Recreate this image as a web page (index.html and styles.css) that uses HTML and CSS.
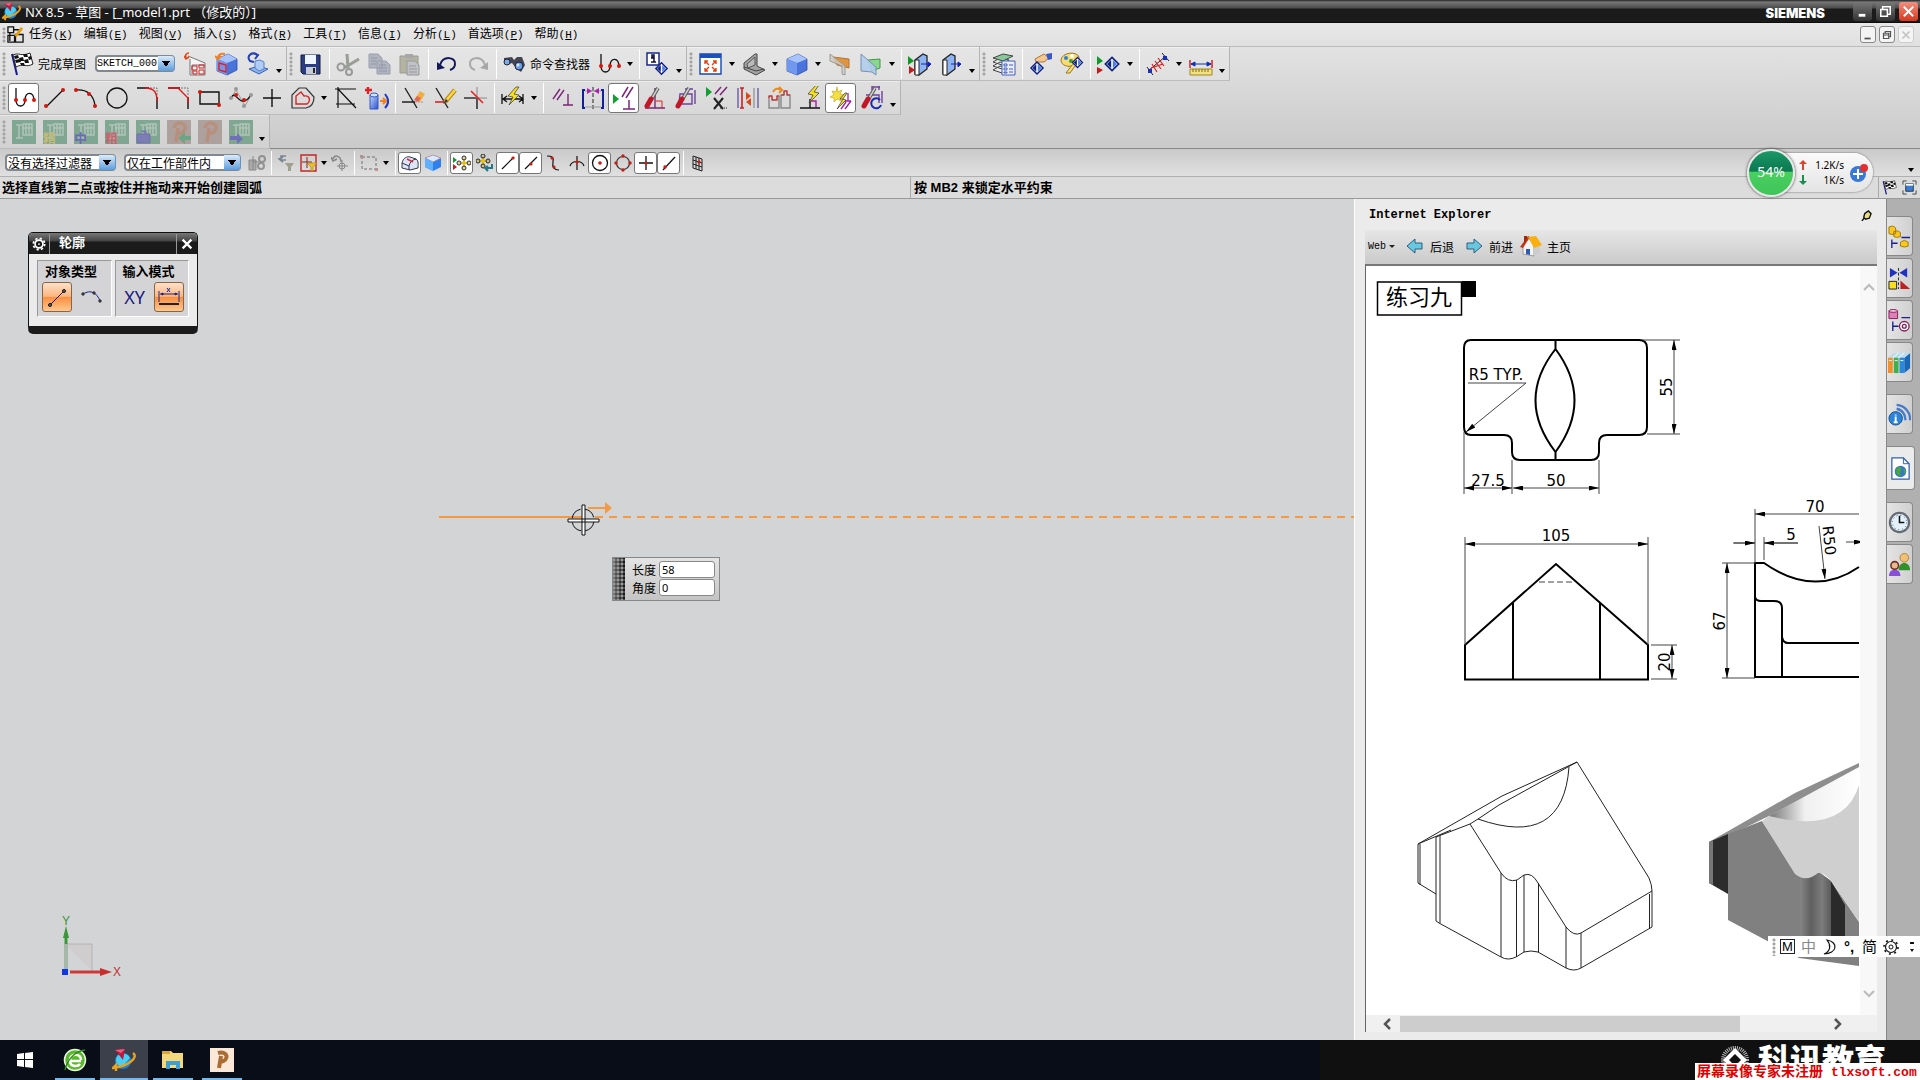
FILE: index.html
```html
<!DOCTYPE html>
<html lang="zh-CN">
<head>
    <meta charset="UTF-8">
    <title>NX 8.5 - 草图</title>
    <link rel="stylesheet" href="styles.css">
</head>
<body>
    <svg class="defs" width="0" height="0">
        <defs>
            <linearGradient id="blue" x1="0" y1="0" x2="1" y2="1"><stop offset="0" stop-color="#c4dcff"/><stop offset="1" stop-color="#2a50d0"/></linearGradient>
            <linearGradient id="bowl" x1="0" y1="0" x2="1" y2="0"><stop offset="0" stop-color="#777"/><stop offset=".4" stop-color="#f0f0f0"/><stop offset="1" stop-color="#fff"/></linearGradient>
            <linearGradient id="groove" x1="0" y1="0" x2="1" y2="0"><stop offset="0" stop-color="#858585"/><stop offset=".3" stop-color="#606060"/><stop offset=".6" stop-color="#7c7c7c"/><stop offset="1" stop-color="#444"/></linearGradient>
            <marker id="arr" viewBox="0 0 12 6" refX="12" refY="3" markerWidth="12" markerHeight="5" markerUnits="userSpaceOnUse" orient="auto-start-reverse"><path d="M0 0 12 3 0 6z"/></marker>
        </defs>
        <symbol id="i-profile" viewBox="0 0 24 24"><path d="M4 2v12c0 8 9 8 9 0 0-9 9-9 9 1" fill="none" stroke="#111" stroke-width="1.3"/><g fill="#d01810"><circle cx="4" cy="14" r="2"/><circle cx="13" cy="14" r="2"/><circle cx="22" cy="14" r="2"/></g></symbol>
        <symbol id="i-nx" viewBox="0 0 24 24"><circle cx="11" cy="13" r="8" fill="#1c80d8"/><path d="M4 12c0-8 12-8 14-2l-8 9c-4-1-6-4-6-7z" fill="#48d0f4"/><path d="M21 5c6 4-4 13-20 15l3-3 0 6" fill="none" stroke="#e8a420" stroke-width="2.4"/><path d="M3 2l10-1-2 11z" fill="#c01838"/><path d="M3 2l10-1-4 4z" fill="#e86080"/></symbol>
        <symbol id="i-flag" viewBox="0 0 24 24"><path d="M2 2l5 21" stroke="#1a1a90" stroke-width="2"/><path d="M3 3c6-3 8 2 17-2l3 11c-7 4-10-1-17 3z" fill="#fff" stroke="#222"/><path d="M4 4l4-1 1 3-4 1zM13 2l4 0 1 3-4 0zM9 6l4-1 1 4-4 0zM18 5l3-1 1 3-3 1zM5 8l5-1 1 3-5 1zM14 8l4-1 1 4-4 0zM10 11l4 0 1 3-4-1z" fill="#111"/></symbol>
        <symbol id="i-conflict" viewBox="0 0 24 24"><path d="M3 13L10 3M7 14L14 4M13 19h10M18 8v11" stroke="#7a2878" fill="none" stroke-width="1.4"/></symbol>
        <symbol id="i-cube" viewBox="0 0 24 24"><path d="M2 7L13 2l9 5v11l-10 5-10-4z" fill="#4a74dc" stroke="#2040a0" stroke-width=".7"/><path d="M2 7l11-5 9 5-10 4z" fill="#a8c4fa"/><path d="M2 7l10 4v12L2 19z" fill="#7098ee"/></symbol>
        <symbol id="i-diamond" viewBox="0 0 24 24"><path d="M12 4l8 8-8 8-8-8z" fill="#fff" stroke="#102080" stroke-width="2"/><path d="M11 7v10l-5-5z" fill="#102080"/><path d="M13 7v10l5-5z" fill="#4a80e0"/></symbol>
        <symbol id="i-bolt" viewBox="0 0 24 24"><path d="M15 1L7 10l5 1-4 8 10-10-5-1 5-7z" fill="#f4e020" stroke="#333" stroke-width=".7"/></symbol>
        <symbol id="i-driver" viewBox="0 0 24 24"><path d="M15 2l-7 12" stroke="#555" stroke-width="3.5"/><path d="M15 2l-7 12" stroke="#ccc" stroke-width="1.6"/><path d="M8 13l-4 7" stroke="#c01828" stroke-width="5" stroke-linecap="round"/></symbol>
        <symbol id="i-sheet" viewBox="0 0 24 24"><path d="M0 0h24v24H0z" fill="#6b9c80"/><path d="M4 5h6M7 5v13M4 18h7M10 8h10M11 4h9v11h-9zM14 4v11M17 4v11" fill="none" stroke="#a8c0b0" stroke-width="1.5"/></symbol>
        <symbol id="i-p" viewBox="0 0 24 24"><path d="M0 0h24v24H0z" fill="#a59490"/><path d="M9 22l2-14M7 8c1-7 12-6 11 0-1 5-5 6-8 5" fill="none" stroke="#b08068" stroke-width="3.5"/></symbol>
    </svg>

    <header class="titlebar">
        <svg class="app-icon" viewBox="0 0 24 24"><use href="#i-nx"/></svg>
        <h1>NX 8.5 - 草图 - [_model1.prt （修改的）]</h1>
        <strong class="brand">SIEMENS</strong>
        <div class="win-buttons">
            <button aria-label="最小化"><svg viewBox="0 0 18 18"><path d="M5 13h7" stroke="#fff" stroke-width="3"/></svg></button>
            <button aria-label="还原"><svg viewBox="0 0 18 18"><path d="M6 7V4h8v8h-3M4 7h7v7H4z" fill="none" stroke="#fff" stroke-width="1.6"/></svg></button>
            <button class="close" aria-label="关闭"><svg viewBox="0 0 18 18"><path d="M4 4l10 10M14 4L4 14" stroke="#fff" stroke-width="2"/></svg></button>
        </div>
    </header>

    <nav class="menubar">
        <span class="grip"></span>
        <svg class="menu-icon" viewBox="0 0 18 18"><path d="M1 1h6v6H1zM3 7v9M1 10h7v7H1zM9 9h8v8H9zM7 4h8" fill="none" stroke="#111" stroke-width="1.4"/><path d="M16 2l-7 9" stroke="#e0a010" stroke-width="3"/></svg>
        <a href="#">任务<span>(<u>K</u>)</span></a>
        <a href="#">编辑<span>(<u>E</u>)</span></a>
        <a href="#">视图<span>(<u>V</u>)</span></a>
        <a href="#">插入<span>(<u>S</u>)</span></a>
        <a href="#">格式<span>(<u>R</u>)</span></a>
        <a href="#">工具<span>(<u>T</u>)</span></a>
        <a href="#">信息<span>(<u>I</u>)</span></a>
        <a href="#">分析<span>(<u>L</u>)</span></a>
        <a href="#">首选项<span>(<u>P</u>)</span></a>
        <a href="#">帮助<span>(<u>H</u>)</span></a>
        <div class="doc-buttons">
            <button aria-label="最小化"><svg viewBox="0 0 16 16"><path d="M4 12h7" stroke="#555" stroke-width="2"/></svg></button>
            <button aria-label="还原"><svg viewBox="0 0 16 16"><path d="M6 6V4h6v6h-2M4 6h6v6H4zM4 8h6" fill="none" stroke="#555" stroke-width="1.4"/></svg></button>
            <button aria-label="关闭" disabled><svg viewBox="0 0 16 16"><path d="M4 4l8 8M12 4l-8 8" stroke="#c4c4c4" stroke-width="2"/></svg></button>
        </div>
    </nav>

    <div class="toolbars">
        <div class="toolrow">
            <div class="toolbar">
                <span class="grip"></span>
                <button class="wide finish"><svg viewBox="0 0 24 24"><use href="#i-flag"/></svg>完成草图</button>
                <label class="drop sketch"><select aria-label="草图名"><option>SKETCH_000</option></select></label>
                <button class="tool" aria-label="定向到草图"><svg viewBox="0 0 24 24"><path d="M4 4l17 7v12H6V7M8 22V13h13" fill="#f4f4f4" stroke="#777"/><path d="M8 14h5v4H8zM15 13h5v3h-5zM9 19h4v3H9zM15 18h5v4h-5z" fill="none" stroke="#d02020"/><path d="M5 1c-3 0-4 2-3 5M0 4l2 3 3-2" fill="none" stroke="#e04818" stroke-width="1.6"/></svg></button>
                <button class="tool" aria-label="定向到模型"><svg viewBox="0 0 24 24"><use href="#i-cube"/><path d="M4 11l7 2v7l-7-2z" fill="none" stroke="#e02020" stroke-width="1.4"/><path d="M10 2C5 1 3 3 3 6M0 4l3 3 3-3" fill="none" stroke="#f08020" stroke-width="2"/></svg></button>
                <button class="tool" aria-label="重新附着"><svg viewBox="0 0 24 24"><path d="M3 17l9-3 10 3-9 5z" fill="#8ab4f0" stroke="#3860b0"/><path d="M9 16V9l5-1 4 2v7l-5 2z" fill="#b0ccf4" stroke="#5880c8"/><path d="M11 3C6-1 0 4 4 9l4 1M8 1l4 2-3 4" fill="none" stroke="#2840b0" stroke-width="2"/></svg></button>
                <button class="arrow low" aria-label="更多"></button>
            </div>
            <div class="toolbar">
                <span class="grip"></span>
                <button class="tool" aria-label="保存"><svg viewBox="0 0 24 24"><path d="M2 3h19v19H4l-2-2z" fill="#2c3c80" stroke="#101840"/><path d="M6 3h11v9H6z" fill="#f0f6ff"/><path d="M7 15h10v7H7z" fill="#c8ccd8"/><path d="M14 16h2v5h-2z" fill="#222"/></svg></button>
                <span class="sep"></span>
                <button class="tool off" aria-label="剪切"><svg viewBox="0 0 24 24"><path d="M11 2l1 14M23 7l-15 9" stroke="#888c80" stroke-width="3"/><circle cx="5" cy="15" r="3.5" fill="none" stroke="#888" stroke-width="2"/><circle cx="13" cy="20" r="3" fill="none" stroke="#888" stroke-width="2"/></svg></button>
                <button class="tool off" aria-label="复制"><svg viewBox="0 0 24 24"><path d="M2 2h9l4 4v10H2zM10 9h9l4 4v9H10z" fill="#a4a8b8" stroke="#8a8ea0"/><path d="M4 6h6M4 9h5M4 12h5M12 13h7M12 16h8M12 19h8" stroke="#80849a"/></svg></button>
                <button class="tool off" aria-label="粘贴"><svg viewBox="0 0 24 24"><path d="M2 4h18v17H2z" fill="#a8a894" stroke="#8a8a7c"/><path d="M7 2h8v4H7z" fill="#999"/><path d="M9 9h8l4 4v10H9z" fill="#b8bac4" stroke="#888"/><path d="M11 14h7M11 17h8M11 20h8" stroke="#888"/></svg></button>
                <span class="sep"></span>
                <button class="tool" aria-label="撤销"><svg viewBox="0 0 24 24"><path d="M5 13C8 3 21 5 20 12c0 3-2 5-5 6" fill="none" stroke="#141858" stroke-width="2"/><path d="M2 10v8l8-2z" fill="#141858"/></svg></button>
                <button class="tool off" aria-label="重做"><svg viewBox="0 0 24 24"><path d="M19 13C16 3 3 5 4 12c0 3 2 5 5 6" fill="none" stroke="#999" stroke-width="2"/><path d="M22 10v8l-8-2z" fill="#999"/></svg></button>
                <span class="sep"></span>
                <button class="wide finder"><svg viewBox="0 0 24 24"><path d="M2 6l8-1 2 3 3-3 5 0 3 8-4 7-5-4-4-5-5 2-3-3z" fill="#445"/><circle cx="5" cy="10" r="3" fill="#7aa8e8" stroke="#223"/><circle cx="17" cy="14" r="4" fill="#6a9ce8" stroke="#223"/><circle cx="16" cy="13" r="1.5" fill="#d8e8ff"/></svg>命令查找器</button>
                <button class="tool" aria-label="轮廓"><svg viewBox="0 0 24 24"><use href="#i-profile"/></svg></button>
                <button class="arrow" aria-label="选项"></button>
                <span class="sep"></span>
                <button class="tool" aria-label="信息"><svg viewBox="0 0 24 24"><path d="M1 1h12v12H1z" fill="#fff" stroke="#1a2a88" stroke-width="1.5"/><path d="M6 3h2v2H6zM5 6h3v4M5 10h5" fill="none" stroke="#101040" stroke-width="1.5"/><use href="#i-diamond" x="7" y="8" width="17" height="17"/></svg></button>
                <button class="arrow low" aria-label="更多"></button>
            </div>
            <div class="toolbar">
                <span class="grip"></span>
                <button class="tool" aria-label="适合窗口"><svg viewBox="0 0 24 24"><path d="M1 2h21v20H1z" fill="#fff" stroke="#1848a8" stroke-width="1.4"/><path d="M1 2h21v4H1z" fill="#1c50c0"/><path d="M6 12V9h3M14 9h3v3M6 16v3h3M17 16v3h-3M6 9l4 4M17 9l-4 4M6 19l4-4M17 19l-4-4" fill="none" stroke="#e04010" stroke-width="1.4"/></svg></button>
                <button class="arrow" aria-label="选项"></button>
                <button class="tool" aria-label="定向视图"><svg viewBox="0 0 24 24"><path d="M2 11L13 2h2v12l8 4-9 5-12-6z" fill="#a4a4a4" stroke="#444"/><path d="M5 12l8-7v8l-7 3z" fill="#bbb" stroke="#555"/><path d="M2 15l12 4 8-2" stroke="#444" fill="none"/></svg></button>
                <button class="arrow" aria-label="选项"></button>
                <button class="tool" aria-label="着色"><svg viewBox="0 0 24 24"><use href="#i-cube"/></svg></button>
                <button class="arrow" aria-label="选项"></button>
                <button class="tool" aria-label="编辑截面"><svg viewBox="0 0 24 24"><path d="M5 5l16 2v9l-12-3z" fill="#e09440" stroke="#b87430"/><path d="M2 2l15 12v9l-3-1v-8L2 9z" fill="#d0ccc0" fill-opacity=".8" stroke="#999"/></svg></button>
                <button class="tool" aria-label="剪切截面"><svg viewBox="0 0 24 24"><path d="M9 8l12-1v9l-8 3z" fill="#88d890" stroke="#409848"/><path d="M2 2l15 13v8l-4-3-11-1z" fill="#b0ccec" fill-opacity=".9" stroke="#7890b0"/></svg></button>
                <button class="arrow" aria-label="选项"></button>
                <span class="sep"></span>
                <button class="tool" aria-label="显示"><svg viewBox="0 0 24 24"><path d="M7 8l8-6 4 2v13l-8 6-4-1z" fill="#90b4f0" stroke="#222" stroke-width="1.3"/><path d="M7 8h4v15H7z" fill="#fff" stroke="#222"/><path d="M0 4l6 5-6 4z" fill="#109828"/><path d="M1 14l6 4-6 4z" fill="#c81818"/><path d="M13 12h7v-2l3 2-3 3v-3" fill="#1020c0" stroke="#1020c0"/></svg></button>
                <button class="tool" aria-label="隐藏"><svg viewBox="0 0 24 24"><path d="M4 8l8-6 4 2v13l-8 6-4-1z" fill="#90b4f0" stroke="#222" stroke-width="1.3"/><path d="M4 8h4v15H4z" fill="#fff" stroke="#222"/><path d="M12 12h7v-2l3 2-3 3v-3" fill="#1020c0" stroke="#1020c0"/></svg></button>
                <button class="arrow low" aria-label="更多"></button>
            </div>
            <div class="toolbar">
                <span class="grip"></span>
                <button class="tool" aria-label="图层设置"><svg viewBox="0 0 24 24"><path d="M1 18l7-4 9 2-7 5zM1 14l7-4 9 2-7 5zM1 10l7-4 9 2-7 5z" fill="#e8ece8" stroke="#444"/><path d="M1 6l10-4 10 2-10 5z" fill="#88c898" stroke="#444"/><path d="M10 9h13v14H10z" fill="#e8eeff" stroke="#4860b8"/><path d="M12 12h3v2h-3zM12 16h3v2h-3zM12 20h3v1h-3zM17 13h4M17 17h4M17 20h4" fill="none" stroke="#4860b8"/></svg></button>
                <span class="sep"></span>
                <button class="tool" aria-label="编辑对象显示"><svg viewBox="0 0 24 24"><path d="M6 7l9-5 5 4-5 4-8 0z" fill="#f4c890" stroke="#a87838"/><path d="M17 2l6-1v6l-4 1z" fill="#3858c8"/><use href="#i-diamond" x="-1" y="7" width="18" height="18"/></svg></button>
                <button class="tool" aria-label="对象颜色"><svg viewBox="0 0 24 24"><path d="M1 8C2 0 17-1 19 5c1 6-6 4-6 7 0 4-12 3-12-4z" fill="#f8dc70" stroke="#9c7818"/><circle cx="6" cy="6" r="2" fill="#3080e0"/><circle cx="12" cy="4" r="2" fill="#fff"/><circle cx="11" cy="9" r="2" fill="#30a048"/><path d="M12 13l-6 8h4l5-7" fill="#f8dc70" stroke="#9c7818"/><use href="#i-diamond" x="10" y="3" width="15" height="15"/></svg></button>
                <span class="sep"></span>
                <button class="tool" aria-label="显示和隐藏"><svg viewBox="0 0 24 24"><path d="M0 4l6 5-6 4z" fill="#109828"/><path d="M0 15l6 3-6 4z" fill="#c81818"/><use href="#i-diamond" x="5" y="2" width="20" height="20"/></svg></button>
                <button class="arrow" aria-label="选项"></button>
                <span class="sep"></span>
                <button class="tool" aria-label="测量"><svg viewBox="0 0 24 24"><path d="M2 19L20 4M1 15l6 8M16 1l7 8" stroke="#222"/><path d="M6 12l5 8M9 9l6 8M12 6l6 8M5 16l12-4" stroke="#d82020" stroke-width="1.2"/><path d="M2 17h4v4H2zM17 4h4v4h-4z" fill="#1830c0"/></svg></button>
                <button class="arrow" aria-label="选项"></button>
                <button class="tool" aria-label="测量距离"><svg viewBox="0 0 24 24"><path d="M1 8v8M23 8v8" stroke="#d82020" stroke-width="1.5"/><path d="M2 12h20M6 10l-4 2 4 2zM18 10l4 2-4 2z" fill="#1030b0" stroke="#1030b0"/><path d="M1 17h22v6H1z" fill="#f4e080" stroke="#a08820"/><path d="M4 17v3M7 17v3M10 17v3M13 17v3M16 17v3M19 17v3" stroke="#806810"/></svg></button>
                <button class="arrow low" aria-label="更多"></button>
            </div>
        </div>

        <div class="toolrow">
            <div class="toolbar">
                <span class="grip"></span>
                <button class="tool on" aria-label="轮廓"><svg viewBox="0 0 24 24"><use href="#i-profile"/></svg></button>
                <button class="tool" aria-label="直线"><svg viewBox="0 0 24 24"><path d="M3 21L20 4" stroke="#111" stroke-width="1.3"/><circle cx="3" cy="20" r="2" fill="#d01810"/><circle cx="20" cy="4" r="2" fill="#d01810"/></svg></button>
                <button class="tool" aria-label="圆弧"><svg viewBox="0 0 24 24"><path d="M2 4c11-1 18 5 19 16" fill="none" stroke="#111" stroke-width="1.3"/><g fill="#d01810"><circle cx="2" cy="4" r="2"/><circle cx="15" cy="8" r="2"/><circle cx="21" cy="20" r="2"/></g></svg></button>
                <button class="tool" aria-label="圆"><svg viewBox="0 0 24 24"><circle cx="12" cy="12" r="10" fill="none" stroke="#111" stroke-width="1.3"/></svg></button>
                <button class="tool" aria-label="圆角"><svg viewBox="0 0 24 24"><path d="M1 2h12M21 11v12" stroke="#111" stroke-width="1.4"/><path d="M14 2h7v8" stroke="#777" stroke-dasharray="2 1" fill="none"/><path d="M9 2c8 0 12 3 12 13" fill="none" stroke="#e01818" stroke-width="1.4"/></svg></button>
                <button class="tool" aria-label="倒斜角"><svg viewBox="0 0 24 24"><path d="M1 2h12M21 11v12" stroke="#111" stroke-width="1.4"/><path d="M14 2h7v8" stroke="#777" stroke-dasharray="2 1" fill="none"/><path d="M1 2h10l10 10v5" fill="none" stroke="#e01818" stroke-width="1.4"/></svg></button>
                <button class="tool" aria-label="矩形"><svg viewBox="0 0 24 24"><path d="M2 6h19v12H2z" fill="none" stroke="#111" stroke-width="1.4"/><circle cx="2" cy="6" r="2" fill="#d01810"/><circle cx="21" cy="19" r="2" fill="#d01810"/></svg></button>
                <button class="tool" aria-label="艺术样条"><svg viewBox="0 0 24 24"><path d="M2 12l5-8 9 16 6-11" fill="none" stroke="#999"/><path d="M2 12c4-8 7 4 12 3 5 0 6-4 8-6" fill="none" stroke="#111" stroke-width="1.3"/><g fill="#999"><circle cx="2" cy="12" r="2"/><circle cx="7" cy="3" r="2"/><circle cx="15" cy="20" r="2"/><circle cx="22" cy="9" r="2"/></g><g fill="#d01810"><circle cx="7" cy="9" r="2"/><circle cx="15" cy="14" r="2"/></g></svg></button>
                <button class="tool" aria-label="点"><svg viewBox="0 0 24 24"><path d="M3 12h18M12 3v18" stroke="#111" stroke-width="1.4"/></svg></button>
                <button class="tool" aria-label="偏置曲线"><svg viewBox="0 0 24 24"><path d="M1 22V9l7-7h7l8 9c0 6-3 10-8 11z" fill="none" stroke="#333" stroke-width="1.2"/><path d="M5 18v-8l5-4 3 4c6-1 7 5 3 8z" fill="none" stroke="#d02828" stroke-width="1.4"/></svg></button>
                <button class="arrow" aria-label="选项"></button>
                <button class="tool" aria-label="派生直线"><svg viewBox="0 0 24 24"><path d="M1 3h21M4 1v21M2 18h19M4 3l18 19" stroke="#111" stroke-width="1.2"/></svg></button>
                <button class="tool" aria-label="投影曲线"><svg viewBox="0 0 24 24"><path d="M0 4h7M3 1v7" stroke="#e02020" stroke-width="2.4"/><path d="M5 9h8v14H5z" fill="url(#blue)" stroke="#3858b8"/><ellipse cx="9" cy="9" rx="4" ry="2" fill="#d0e4ff" stroke="#3858b8"/><path d="M20 8c4 5 4 10 0 14" fill="none" stroke="#2038c0" stroke-width="2"/><path d="M15 15h6M18 12l3 3-3 3" stroke="#f08020" fill="none" stroke-width="2"/></svg></button>
                <span class="sep"></span>
                <button class="tool" aria-label="快速修剪"><svg viewBox="0 0 24 24"><path d="M3 2l12 20M0 16h13" stroke="#222" stroke-width="1.4"/><path d="M13 16h9" stroke="#999" stroke-dasharray="2 1"/><path d="M13 13l5-8 5 3-5 8z" fill="#f0b040"/><path d="M12 14l3-4 4 2-3 4z" fill="#e06858"/></svg></button>
                <button class="tool" aria-label="快速延伸"><svg viewBox="0 0 24 24"><path d="M3 2l12 20" stroke="#222" stroke-width="1.4"/><path d="M2 16h9" stroke="#e02020" stroke-width="1.6"/><path d="M22 4L12 16" stroke="#b88410" stroke-width="4.6"/><path d="M22 4L12 16" stroke="#f8d848" stroke-width="2.6"/><path d="M13 13l-3 5 5-3z" fill="#333"/></svg></button>
                <button class="tool" aria-label="制作拐角"><svg viewBox="0 0 24 24"><path d="M0 12h12M13 12v11" stroke="#333" stroke-width="1.6"/><path d="M13 1v11h10" stroke="#888" fill="none"/><path d="M7 5l12 12" stroke="#e82020" stroke-width="1.6"/></svg></button>
                <span class="sep"></span>
                <button class="tool" aria-label="自动判断尺寸"><svg viewBox="0 0 24 24"><path d="M1 8v10M22 8v10M2 13h20M6 10l-4 3 4 3M18 10l4 3-4 3" fill="none" stroke="#111" stroke-width="1.3"/><use href="#i-bolt"/></svg></button>
                <button class="arrow" aria-label="选项"></button>
                <span class="sep"></span>
                <button class="tool" aria-label="约束"><svg viewBox="0 0 24 24"><use href="#i-conflict"/></svg></button>
                <button class="tool" aria-label="设为对称"><svg viewBox="0 0 24 24"><path d="M4 4H2v18h2M20 4h2v18h-2" fill="none" stroke="#1020a0" stroke-width="2"/><path d="M12 1v22" stroke="#222" stroke-dasharray="4 2"/><path d="M4 5h16M4 21h16" stroke="#999"/><path d="M6 2l5 3-5 3zM18 2l-5 3 5 3z" fill="#b020b0"/></svg></button>
                <button class="tool on" aria-label="显示草图约束"><svg viewBox="0 0 24 24"><path d="M1 8l6 5-6 5z" fill="#10a030"/><path d="M10 11l6-10M14 12l7-11M11 23h12M17 14v9" stroke="#7a2878" stroke-width="1.5"/></svg></button>
                <button class="tool" aria-label="自动约束"><svg viewBox="0 0 24 24"><path d="M2 22h20M12 2v20" stroke="#7a2878" stroke-width="1.4"/><path d="M13 15h6v7" fill="none" stroke="#e02020"/><use href="#i-driver"/></svg></button>
                <button class="tool" aria-label="自动尺寸"><svg viewBox="0 0 24 24"><path d="M6 8h12v10H5zM11 3h8M21 4v14" fill="none" stroke="#7040a0" stroke-width="1.4"/><use href="#i-driver"/></svg></button>
                <button class="tool" aria-label="显示/移除约束"><svg viewBox="0 0 24 24"><path d="M1 1l6 5-6 5z" fill="#10a030"/><path d="M10 8l6-7M15 9l7-8" stroke="#7a2878" stroke-width="1.5"/><path d="M9 12l9 11M18 12L9 23" stroke="#222" stroke-width="2"/><path d="M15 22h8" stroke="#222" stroke-dasharray="1 1"/></svg></button>
                <button class="tool" aria-label="转换参考"><svg viewBox="0 0 24 24"><path d="M2 2v20M22 2v20" stroke="#5848a0" stroke-width="1.2"/><path d="M6 2v20M4 2h4M4 22h4" stroke="#d02020" stroke-width="1.6"/><path d="M18 2v20" stroke="#999" stroke-width="1.4"/><path d="M10 6l5 4-5 4zM15 12v8l-5-4z" fill="#d84818"/></svg></button>
                <button class="tool" aria-label="备选解"><svg viewBox="0 0 24 24"><path d="M2 22V10h3v4h5v-4h2v12zM14 22V9h3V5h3v4h3v13z" fill="none" stroke="#888" stroke-width="1.4"/><path d="M2 12v-2h3v4h5v-4h2M14 9h3V5h3v4h3" fill="none" stroke="#e02020"/><path d="M6 6c2-4 5-4 8-2M12 1l3 3-3 3" fill="none" stroke="#e88820" stroke-width="2"/></svg></button>
                <button class="tool" aria-label="自动判断约束"><svg viewBox="0 0 24 24"><path d="M2 22h20M12 13v9" stroke="#111" stroke-width="1.4"/><path d="M12 15h6v6" fill="none" stroke="#a020a0" stroke-width="1.4"/><use href="#i-bolt" x="3" y="-2"/></svg></button>
                <button class="tool on" aria-label="创建自动约束"><svg viewBox="0 0 24 24"><path d="M13 15l9 0M19 7v8M12 23l5-7M16 23l6-8" stroke="#a020a0" stroke-width="1.3"/><path d="M8 1l1 5 4-2-2 4 4 1-4 2 1 4-4-2-3 3v-4l-4-1 4-2-2-4 4 1z" fill="#f4e040" stroke="#c0a010" stroke-width=".6"/><path d="M16 7l-5 6 3 0-6 10 9-9-3-1 4-6z" fill="#f4e020" stroke="#333" stroke-width=".7"/></svg></button>
                <button class="tool" aria-label="连续自动标注"><svg viewBox="0 0 24 24"><path d="M6 9h13v8M12 1h8M12 0v4M19 0v4M22 5v12" fill="none" stroke="#7040a0" stroke-width="1.4"/><use href="#i-driver"/><path d="M20 14a5 5 0 1 0 1 5" fill="none" stroke="#1828b0" stroke-width="2"/></svg></button>
                <button class="arrow low" aria-label="更多"></button>
            </div>
        </div>

        <div class="toolrow">
            <div class="toolbar plugin">
                <span class="grip"></span>
                <button class="tool off" aria-label="表格"><svg viewBox="0 0 24 24"><use href="#i-sheet"/></svg></button>
                <button class="tool off" aria-label="精"><svg viewBox="0 0 24 24"><use href="#i-sheet"/><text x="0" y="23" fill="#c0b460">精</text></svg></button>
                <button class="tool off" aria-label="中"><svg viewBox="0 0 24 24"><use href="#i-sheet"/><text x="0" y="23" fill="#5050b0">中</text></svg></button>
                <button class="tool off" aria-label="粗"><svg viewBox="0 0 24 24"><use href="#i-sheet"/><text x="0" y="23" fill="#c84858">粗</text></svg></button>
                <button class="tool off" aria-label="保存表"><svg viewBox="0 0 24 24"><use href="#i-sheet"/><path d="M1 14h13v9H1zM5 11h5v3" fill="#6868b0" stroke="#5858a0"/></svg></button>
                <button class="tool off" aria-label="导入"><svg viewBox="0 0 24 24"><use href="#i-p"/><path d="M24 16h-6v-4l-7 6 7 6v-4h6z" fill="#559970"/></svg></button>
                <button class="tool off" aria-label="打开"><svg viewBox="0 0 24 24"><use href="#i-p"/></svg></button>
                <button class="tool off" aria-label="导出"><svg viewBox="0 0 24 24"><use href="#i-sheet"/><path d="M1 16h7v-3l6 6-6 5v-4H1z" fill="#5858b0"/></svg></button>
                <button class="arrow low" aria-label="更多"></button>
            </div>
        </div>
    </div>

    <div class="selection">
        <label class="drop filter"><select aria-label="类型过滤器"><option>没有选择过滤器</option></select></label>
        <label class="drop scope"><select aria-label="选择范围"><option>仅在工作部件内</option></select></label>
        <button class="pick off" aria-label="细部"><svg viewBox="0 0 18 18"><path d="M1 6h7v10H1zM5 2v14M5 8h6" fill="#999" stroke="#666"/><circle cx="14" cy="5" r="3" fill="none" stroke="#777" stroke-width="2"/><circle cx="13" cy="12" r="3" fill="none" stroke="#777" stroke-width="2"/></svg></button>
        <span class="sep"></span>
        <button class="pick off" aria-label="重置过滤器"><svg viewBox="0 0 18 18"><path d="M9 2H4v4h5M6 3L2 5l4 3" fill="none" stroke="#567" stroke-width="1.6"/><path d="M8 9h9l-3 4v4h-3v-4z" fill="#888870"/></svg></button>
        <button class="pick" aria-label="允许选择"><svg viewBox="0 0 18 18"><path d="M1 1h15v16H1z" fill="none" stroke="#c02828" stroke-width="1.4"/><path d="M7 3v11M2 8h10" stroke="#822" /><path d="M7 9h10l-4 4v4h-2v-4z" fill="#f0c020" stroke="#a08010" stroke-width=".6"/></svg></button>
        <button class="arrow small" aria-label="选项"></button>
        <button class="pick off" aria-label="取消选择"><svg viewBox="0 0 18 18"><path d="M2 5c2-5 8-3 8 3M0 3l2 4 4-2" fill="none" stroke="#666" stroke-width="1.5"/><circle cx="11" cy="12" r="3" fill="none" stroke="#666"/><path d="M11 6v11M6 12h11" stroke="#666"/></svg></button>
        <span class="sep"></span>
        <button class="pick off" aria-label="矩形选择"><svg viewBox="0 0 18 18"><path d="M2 3h14v12H2z" fill="none" stroke="#444" stroke-dasharray="3 2"/><path d="M0 1h3v3H0zM15 14h3v3h-3z" fill="#a77"/></svg></button>
        <button class="arrow" aria-label="选项"></button>
        <span class="sep"></span>
        <button class="pick on" aria-label="高亮隐藏边"><svg viewBox="0 0 18 18"><path d="M1 9c1-5 5-7 8-6l6 2c3 2 2 6 2 9l-8 2-8-2z" fill="#dce4f8" stroke="#334" stroke-width="1"/><path d="M1 9l7 3c1-4 3-6 7-7M8 12v4" fill="none" stroke="#334"/><path d="M6 5l6 3" stroke="#d03040" stroke-width="1.5"/></svg></button>
        <button class="pick" aria-label="着色"><svg viewBox="0 0 18 18"><path d="M1 4l8-3 8 3v9l-8 4-8-4z" fill="#2c80f0"/><path d="M1 4l8-3 8 3-8 4z" fill="#dce8ff" stroke="#c07070" stroke-width=".6"/><path d="M1 4l8 4v9l-8-4z" fill="#60b0ff"/></svg></button>
        <span class="sep"></span>
        <button class="pick on" aria-label="启用捕捉点"><svg viewBox="0 0 18 18"><path d="M0 3l4 3-4 3z" fill="#109828"/><path d="M0 10l4 3-4 3z" fill="#d01818"/><path d="M11 3v12M5 9h12" stroke="#ca1" stroke-width="1"/><g fill="none" stroke="#222"><circle cx="11" cy="4" r="2"/><circle cx="11" cy="14" r="2"/><circle cx="6" cy="9" r="2"/><circle cx="16" cy="9" r="2"/></g><circle cx="11" cy="9" r="2" fill="#e8c010"/></svg></button>
        <button class="pick" aria-label="清除捕捉点"><svg viewBox="0 0 18 18"><path d="M7 2v12M1 7h12" stroke="#ca1"/><g fill="none" stroke="#222"><circle cx="7" cy="2" r="2"/><circle cx="7" cy="12" r="2"/><circle cx="2" cy="7" r="2"/><circle cx="12" cy="7" r="2"/></g><circle cx="7" cy="7" r="2" fill="#e8c010"/><path d="M16 10v4h-6M12 12l-3 2 3 3" fill="none" stroke="#207888" stroke-width="2"/></svg></button>
        <button class="pick on" aria-label="端点"><svg viewBox="0 0 18 18"><path d="M3 15L15 3" stroke="#111" stroke-width="1.2"/><circle cx="14" cy="4" r="1.6" fill="#d01810"/></svg></button>
        <button class="pick on" aria-label="中点"><svg viewBox="0 0 18 18"><path d="M3 15L15 3" stroke="#111" stroke-width="1.2"/><circle cx="9" cy="10" r="1.6" fill="#d01810"/></svg></button>
        <button class="pick" aria-label="控制点"><svg viewBox="0 0 18 18"><path d="M2 2c5 0 7 1 6 6s1 8 6 8" fill="none" stroke="#111" stroke-width="1.2"/><circle cx="7" cy="4" r="1.6" fill="#d01810"/><circle cx="9" cy="13" r="1.6" fill="#d01810"/></svg></button>
        <button class="pick" aria-label="交点"><svg viewBox="0 0 18 18"><path d="M9 2v14M2 12c2-6 12-6 14 0" fill="none" stroke="#111" stroke-width="1.2"/><circle cx="9" cy="8" r="1.6" fill="#d01810"/></svg></button>
        <button class="pick on" aria-label="圆心"><svg viewBox="0 0 18 18"><circle cx="9" cy="9" r="7.5" fill="none" stroke="#111" stroke-width="1.3"/><circle cx="9" cy="9" r="1.8" fill="#d01810"/></svg></button>
        <button class="pick" aria-label="象限点"><svg viewBox="0 0 18 18"><circle cx="9" cy="9" r="6.5" fill="none" stroke="#333" stroke-width="1.2"/><g fill="#d01810"><circle cx="9" cy="2" r="1.7"/><circle cx="9" cy="16" r="1.7"/><circle cx="2" cy="9" r="1.7"/><circle cx="16" cy="9" r="1.7"/></g></svg></button>
        <button class="pick on" aria-label="现有点"><svg viewBox="0 0 18 18"><path d="M9 2v14M2 9h14" stroke="#111" stroke-width="1.3"/><circle cx="9" cy="9" r="1.6" fill="#d01810"/></svg></button>
        <button class="pick on" aria-label="曲线上的点"><svg viewBox="0 0 18 18"><path d="M3 16L15 3" stroke="#111" stroke-width="1.2"/><circle cx="5" cy="13" r="1.7" fill="#d01810"/></svg></button>
        <span class="sep"></span>
        <button class="pick" aria-label="面上的点"><svg viewBox="0 0 18 18"><path d="M4 2l9 3v12L4 14zM7 3v12M10 4v12M4 6l9 3M4 10l9 3" fill="none" stroke="#222"/><circle cx="10" cy="8" r="1.6" fill="#d01810"/></svg></button>
        <button class="arrow last low" aria-label="更多"></button>
    </div>

    <div class="status">
        <p class="cue">选择直线第二点或按住并拖动来开始创建圆弧</p>
        <p class="state">按 MB2 来锁定水平约束</p>
        <div class="status-tools">
            <svg viewBox="0 0 24 24"><use href="#i-flag"/></svg>
            <svg viewBox="0 0 16 16"><path d="M1 5V1h4M11 1h4v4M15 11v4h-4M5 15H1v-4" fill="none" stroke="#444"/><path d="M4 4h8v8H4z" fill="#3c7cd8" stroke="#234"/><path d="M4 4h8v2H4z" fill="#fff"/></svg>
        </div>
    </div>

    <div class="workspace">
        <main class="canvas">
            <svg class="sketch-lines" width="100%" height="100%">
                <g stroke="#f49a44" stroke-width="2">
                    <path d="M439 318h145"/>
                    <line x1="595" y1="318" x2="100%" y2="318" stroke-dasharray="8 6"/>
                    <path d="M588 309h18"/>
                </g>
                <path d="M605 303l7 6-7 6z" fill="#f49a44"/>
                <g fill="none" stroke="#111">
                    <circle cx="583" cy="321" r="11" stroke-dasharray="13 4" stroke-dashoffset="-2"/>
                    <path d="M582 306h3v30h-3zM568 320h31v3h-31z" fill="#fff"/>
                </g>
                <g transform="translate(65 773)">
                    <path d="M0-28h27v27" fill="#cfcdcd" stroke="#b4b4b4"/>
                    <path d="M1 0v-28" stroke="#a8b8a8" stroke-width="4"/>
                    <path d="M1-28v-8" stroke="#3c963c" stroke-width="3"/>
                    <path d="M-2-34h6l-3-12z" fill="#3c963c"/>
                    <path d="M5 0h32" stroke="#d03838" stroke-width="3"/>
                    <path d="M35-4l12 4-12 4z" fill="#c83030"/>
                    <path d="M-3-3h6v6h-6z" fill="#1038e0"/>
                    <text x="-3" y="-47" fill="#3c963c">Y</text>
                    <text x="48" y="4" fill="#c83030">X</text>
                </g>
            </svg>

            <section class="dialog">
                <header>
                    <button aria-label="设置"><svg viewBox="0 0 16 16"><circle cx="8" cy="8" r="4.5" fill="none" stroke="#fff" stroke-width="2"/><circle cx="8" cy="8" r="6.5" fill="none" stroke="#fff" stroke-width="2" stroke-dasharray="2.6 2.5"/><circle cx="8" cy="8" r="1" fill="#fff"/></svg></button>
                    <h2>轮廓</h2>
                    <button aria-label="关闭"><svg viewBox="0 0 16 16"><path d="M3 3l10 10M13 3L3 13" stroke="#fff" stroke-width="2.6"/></svg></button>
                </header>
                <div class="dialog-body">
                    <fieldset>
                        <legend>对象类型</legend>
                        <div class="choices">
                            <button class="choice on" aria-label="直线"><svg viewBox="0 0 24 24"><path d="M5 20L19 6" stroke="#202020"/><circle cx="5" cy="20" r="1.5" fill="#666" stroke="#111"/><circle cx="19" cy="6" r="1.5" fill="#666" stroke="#111"/></svg></button>
                            <button class="choice" aria-label="圆弧"><svg viewBox="0 0 24 24"><path d="M3 9c8-5 14-1 17 7" fill="none" stroke="#1a2488"/><g fill="#666" stroke="#222"><circle cx="3" cy="9" r="1.2"/><circle cx="14" cy="8" r="1.2"/><circle cx="20" cy="16" r="1.2"/></g></svg></button>
                        </div>
                    </fieldset>
                    <fieldset>
                        <legend>输入模式</legend>
                        <div class="choices">
                            <button class="choice xy">XY</button>
                            <button class="choice on" aria-label="参数模式"><svg viewBox="0 0 24 24"><path d="M2 6v11M22 6v11M3 9h18M6 8L4 9l2 1zM18 8l2 1-2 1zM10 3l3 4M13 3l-3 4" stroke="#1a2488" fill="#1a2488"/><path d="M2 19h20" stroke="#222" stroke-width="2"/></svg></button>
                        </div>
                    </fieldset>
                </div>
            </section>

            <form class="params">
                <span class="params-grip"></span>
                <div class="fields">
                    <label for="len">长度</label><input id="len" type="text" value="58">
                    <label for="ang">角度</label><input id="ang" type="text" value="0">
                </div>
            </form>
        </main>

        <aside class="browser">
            <header>
                <h2>Internet Explorer</h2>
                <svg viewBox="0 0 12 12"><path d="M1 12l3-4M4 4l4-3 3 3-2 5-4 1-2-2z" fill="#e8e080" stroke="#111" stroke-width="1.5"/></svg>
            </header>
            <div class="browser-bar">
                <button class="web">Web<i></i></button>
                <button><svg viewBox="0 0 18 18"><path d="M1 9l8-7v4h7v6H9v4z" fill="#68c8e0" stroke="#2c6080"/></svg>后退</button>
                <button><svg viewBox="0 0 18 18"><path d="M17 9L9 2v4H2v6h7v4z" fill="#68c8e0" stroke="#2c6080"/></svg>前进</button>
                <button class="home"><svg viewBox="0 0 22 22"><path d="M3 10l5-7 6 6v12l-11-2z" fill="#f4f4f4" stroke="#999"/><path d="M14 11l6-2v9l-6 3z" fill="#ccc"/><path d="M0 12L8 1l2 1-7 11z" fill="#c03818"/><path d="M8 2l8-1 6 9-8 3z" fill="#f8b010"/><path d="M4 1h3v3l-3 4z" fill="#a02818"/><path d="M6 14h4v6l-4-1z" fill="#3058b8"/></svg>主页</button>
            </div>
            <div class="page">
                <div class="page-view">
                    <svg class="drawing" width="493" height="749">
                        <rect x="11.5" y="16" width="84" height="33" fill="none" stroke="#000" stroke-width="1.5"/>
                        <rect x="96" y="15" width="14" height="16"/>
                        <text class="heading" x="20" y="39">练习九</text>

                        <!-- outlines -->
                        <g class="thick">
                            <path d="M105 74h168q8 0 8 8v79q0 8-8 8h-32q-8 0-8 8v9q0 8-8 8h-71q-8 0-8-8v-9q0-8-8-8h-33q-7 0-7-8V82q0-8 7-8z"/>
                            <path d="M189.500 74v9M189.500 186v8M189.500 83q-40 51 0 103q38-52 0-103"/>
                            <path d="M99 379l91-81 92 81v34.500H99zM147 337v76M234 337v76"/>
                            <path d="M493 411H389V297h9q50 35 95 4M389 331q1 4 6 4h13q8 0 8 7v69M416 371q1 6 6 6h71"/>
                        </g>
                        <path class="thin" d="M173 316h35" stroke-dasharray="6 3"/>

                        <!-- extension lines -->
                        <path class="thin" d="M160 117h-58M277 74h37M281 168h33M98 166v62M146 194v34M233 194v34M99 271v108M282 271v108M285 379h26M285 413h26M389 243v54M398 271v23M356 297h33M356 412h33M398 277h34M368 277h21"/>

                        <!-- dimension lines -->
                        <g class="thin arrows">
                            <line x1="308" y1="74" x2="308" y2="168" marker-start="url(#arr)"/>
                            <line x1="98" y1="222" x2="146" y2="222" marker-start="url(#arr)"/>
                            <line x1="147" y1="222" x2="233" y2="222" marker-start="url(#arr)"/>
                            <line x1="99" y1="278" x2="282" y2="278" marker-start="url(#arr)"/>
                            <line x1="306" y1="379" x2="306" y2="413" marker-start="url(#arr)"/>
                            <line x1="361" y1="297" x2="361" y2="412" marker-start="url(#arr)"/>
                            <line x1="160" y1="117" x2="100" y2="166"/>
                            <line x1="453" y1="260" x2="459" y2="313"/>
                            <line x1="493" y1="248" x2="389" y2="248"/>
                            <line x1="367" y1="277" x2="389" y2="277"/>
                            <line x1="432" y1="277" x2="398" y2="277"/>
                            <line x1="480" y1="276" x2="498" y2="276"/>
                        </g>
                        <g class="dims">
                            <text x="130" y="114">R5 TYP.</text>
                            <text x="122" y="220">27.5</text>
                            <text x="190" y="220">50</text>
                            <text x="190" y="275">105</text>
                            <text x="449" y="246">70</text>
                            <text x="425" y="274">5</text>
                            <text transform="translate(306 121) rotate(-90)">55</text>
                            <text transform="translate(304 396) rotate(-90)">20</text>
                            <text transform="translate(359 355) rotate(-90)">67</text>
                            <text transform="translate(458 275) rotate(84)">R50</text>
                        </g>

                        <!-- isometric view -->
                        <g class="iso">
                            <path d="M211 496l-75 34-84 48v39l18 11M54 578v41M52 578l33-14M70 571v84l3 2 62 34q7 4 15 0l8-5q7-2 14 0l28 16q8 4 15 0l71-41v-36q0-6-3-13L211 496 133 539l-21 14-8 5-34 13M74 570v87"/>
                            <path d="M104 558l31 49q7 10 16 7l7-5q8-3 14 8l28 44q8 10 15 6l71-42M112 553q85 30 91-52"/>
                            <path d="M135 607v84M150.500 614v77M158 609v77M172.500 617v69M200 661v41M215 667v35M283.500 628v35"/>
                        </g>

                        <!-- shaded view -->
                        <path d="M343 576l86-49 64-30v5l-90 48-41 20-19 6z" fill="#8e8e8e"/>
                        <path d="M343 576l19-8v60l-19-11z" fill="#2c2c2c"/>
                        <path d="M343 576l4-2v45l-4-2z" fill="#777"/>
                        <path d="M362 568l34-13 33 52 12 5 12-6 12 9 28 41v44L433 692 362 654z" fill="#808080"/>
                        <path d="M434 610l7 2 12-6 12 9 6 65-37 6z" fill="url(#groove)"/>
                        <path d="M465 615l14 24v50l-14-5z" fill="#2a2a2a"/>
                        <path d="M396 555l7-5 90-30v136l-28-41q-7-9-13-8-12 10-23 1z" fill="#cfcfcf"/>
                        <path d="M403 550l90-49v18q-15 50-90 31z" fill="url(#bowl)"/>
                    </svg>
                    <div class="vscroll">
                        <svg viewBox="0 0 12 8"><path d="M1 7l5-5 5 5" fill="none" stroke="#bbb" stroke-width="2"/></svg>
                        <svg viewBox="0 0 12 8"><path d="M1 1l5 5 5-5" fill="none" stroke="#bbb" stroke-width="2"/></svg>
                    </div>
                </div>
                <div class="hscroll">
                    <svg viewBox="0 0 10 12"><path d="M8 1L3 6l5 5" fill="none" stroke="#555" stroke-width="2.5"/></svg>
                    <span class="track"><span class="thumb"></span></span>
                    <svg viewBox="0 0 10 12"><path d="M2 1l5 5-5 5" fill="none" stroke="#555" stroke-width="2.5"/></svg>
                </div>
            </div>
        </aside>

        <nav class="tabs">
            <button aria-label="装配导航器"><svg viewBox="0 0 24 24"><path d="M1 2l4-1 3 2v6l-4 1-3-1zM6 7l4-1 3 2v4l-4 1-3-1zM13 18l4-2 4 2v4l-4 1-4-1z" fill="#f8c820" stroke="#a07808"/><path d="M4 15v9M4 19h6M14 13h9" stroke="#1a2090" stroke-width="1.4"/></svg></button>
            <button aria-label="约束导航器"><svg viewBox="0 0 24 24"><path d="M2 1l8 5-8 5zM20 1l-8 5 8 5z" fill="#2030c0"/><path d="M11 1v22" stroke="#222" stroke-dasharray="3 2"/><path d="M1 15h8v8H1z" fill="#f8e020" stroke="#222"/><path d="M13 14l10 9H13z" fill="#c02020"/></svg></button>
            <button aria-label="部件导航器"><svg viewBox="0 0 24 24"><path d="M1 2h9v8H1z" fill="#e080b8" stroke="#802058"/><ellipse cx="5.5" cy="2" rx="4.5" ry="1.5" fill="#f8c8e0" stroke="#802058"/><path d="M5 13v10M5 18h6M14 9h9" stroke="#1a2090" stroke-width="1.4"/><circle cx="17" cy="18" r="5" fill="#fff" stroke="#802058" stroke-width="1.4"/><circle cx="17" cy="18" r="2" fill="none" stroke="#802058" stroke-width="1.4"/></svg></button>
            <button aria-label="重用库"><svg viewBox="0 0 24 24"><path d="M17 7l6-5v16l-6 5z" fill="#1868b8"/><path d="M0 7l6-5h17l-6 5z" fill="#b8dcf0"/><path d="M0 7h5v16H0z" fill="#f0902c"/><path d="M6 7h5v16H6z" fill="#40b048"/><path d="M12 7h5v16h-5z" fill="#2c88dc"/><path d="M5 7l6-5M11 7l6-5M1 10h3M7 10h3M13 10h3" stroke="#fff"/></svg></button>
            <button class="gap" aria-label="HD3D工具"><svg viewBox="0 0 24 24"><path d="M9 6a11 11 0 0 1 9 12M9 2a15 15 0 0 1 14 16" fill="none" stroke="#4878c8" stroke-width="2.4"/><circle cx="8" cy="16" r="7" fill="#2c84d8" stroke="#185090"/><path d="M8 12v1M7 15h1v5M6 20h4" stroke="#fff" stroke-width="2" fill="none"/></svg></button>
            <button class="gap active" aria-label="Internet Explorer"><svg viewBox="0 0 24 24"><path d="M3 1h12l6 6v16H3z" fill="#fff" stroke="#3060b0" stroke-width="1.3"/><path d="M15 1v6h6" fill="none" stroke="#3060b0"/><circle cx="12" cy="15" r="6" fill="#3878c8"/><path d="M8 12c4-4 6 0 4 3s2 4 0 5c-4-1-5-4-4-8zM15 12c3 1 3 4 1 6z" fill="#48a838"/></svg></button>
            <button class="gap" aria-label="历史记录"><svg viewBox="0 0 24 24"><circle cx="12" cy="12" r="10" fill="#e4f0fa" stroke="#666c74" stroke-width="2.4"/><circle cx="12" cy="12" r="7.5" fill="none" stroke="#456" stroke-dasharray="1 3"/><path d="M12 5v7h5" fill="none" stroke="#111" stroke-width="1.6"/></svg></button>
            <button aria-label="角色"><svg viewBox="0 0 24 24"><path d="M11 18c0-10 12-10 12 0z" fill="#30902c"/><circle cx="17" cy="5" r="4.5" fill="#f0c078" stroke="#b88030"/><path d="M1 24c0-9 12-9 12 0z" fill="#8850d8"/><circle cx="7" cy="13" r="4" fill="#e8b890" stroke="#703020" stroke-width="1.6"/></svg></button>
        </nav>
    </div>

    <footer class="taskbar">
        <button class="start" aria-label="开始"><svg viewBox="0 0 24 24"><path d="M4 6l7-1v6H4zM12 5l8-1v7h-8zM4 12h7v7l-7-1zM12 12h8v8l-8-1z" fill="#fff"/></svg></button>
        <button class="open" aria-label="浏览器"><svg viewBox="0 0 24 24"><circle cx="12" cy="12" r="10.5" fill="#5cb82c" stroke="#e8f8e0" stroke-width="1.5"/><path d="M18 13H7c0 6 8 6 10 3M7 12c0-7 11-7 11 0" fill="none" stroke="#fff" stroke-width="2.6"/><path d="M2 22C4 12 12 3 22 2" stroke="#2c8818" stroke-width="1.4" fill="none"/></svg></button>
        <button class="open current" aria-label="NX"><svg viewBox="0 0 24 24"><use href="#i-nx"/></svg></button>
        <button class="open" aria-label="文件资源管理器"><svg viewBox="0 0 24 24"><path d="M1 3h9l2 2h10v15H1z" fill="#f4d87c"/><path d="M1 3h8v3H1z" fill="#d8a838"/><path d="M5 13h14v8h-4v-4H9v4H5z" fill="#3ca0d8"/></svg></button>
        <button class="open" aria-label="P"><svg viewBox="0 0 24 24"><path d="M0 0h24v24H0z" fill="#fbe8d8"/><path d="M9 20l2-12M8 5c10-3 12 8 2 9" fill="none" stroke="#a86c34" stroke-width="4"/></svg></button>
        <div class="channel">
            <svg viewBox="0 0 30 30"><circle cx="15" cy="15" r="12" fill="none" stroke="#bbb" stroke-width="4" stroke-dasharray="1 1"/><path d="M15 3l12 12-12 12L3 15z" fill="#fff"/><path d="M15 9l6 6-6 6-6-6z" fill="#111"/></svg>
            <strong>科讯教育</strong>
        </div>
    </footer>

    <div class="speed">
        <span class="ball">54%</span>
        <ul>
            <li><svg class="up" viewBox="0 0 8 10"><path d="M4 0l4 4H5v6H3V4H0z"/></svg>1.2K/s</li>
            <li><svg class="down" viewBox="0 0 8 10"><path d="M4 10l4-4H5V0H3v6H0z"/></svg>1K/s</li>
        </ul>
        <svg class="plus" viewBox="0 0 20 20"><circle cx="9" cy="11" r="8" fill="#3878d8"/><path d="M4 11h10M9 6v10" stroke="#fff" stroke-width="2"/><circle cx="15" cy="5" r="4" fill="#e03030"/></svg>
    </div>

    <div class="ime">
        <span class="grip"></span>
        <b>M</b>
        <span class="dim">中</span>
        <svg viewBox="0 0 16 16"><path d="M5 1c12 2 10 14-3 14 7-3 7-9 3-14z" fill="none" stroke="#111" stroke-width="1.2"/></svg>
        <span class="punct">°,</span>
        <span>简</span>
        <svg viewBox="0 0 16 16"><circle cx="8" cy="8" r="5.5" fill="none" stroke="#111" stroke-width="1.2"/><circle cx="8" cy="8" r="7" fill="none" stroke="#111" stroke-width="1.6" stroke-dasharray="2 3.5"/><circle cx="8" cy="8" r="2" fill="none" stroke="#111"/></svg>
        <svg class="more" viewBox="0 0 6 14"><path d="M1 2h4v2H1zM1 9h4l-2 3z" fill="#111"/></svg>
    </div>

    <div class="notice">屏幕录像专家未注册 <span>tlxsoft.com</span></div>
</body>
</html>
```
FILE: styles.css
```css
* {
    box-sizing: border-box;
}

body {
    margin: 0;
    height: 100vh;
    display: flex;
    flex-direction: column;
    overflow: hidden;
    position: relative;
    font-family: "Liberation Sans", "Noto Sans CJK SC", sans-serif;
    font-size: 12px;
    color: #000;
    background: #d3d4d6;
}

h1, h2, p, ul {
    margin: 0;
    padding: 0;
}

button {
    margin: 0;
    padding: 0;
    border: none;
    background: none;
    font: inherit;
    color: inherit;
    display: flex;
    align-items: center;
    justify-content: center;
    flex-shrink: 0;
}

svg {
    display: block;
    flex-shrink: 0;
}

.defs {
    position: absolute;
}

/* title and menu */
.titlebar {
    height: 23px;
    flex-shrink: 0;
    display: flex;
    align-items: center;
    padding: 0 2px;
    background: linear-gradient(#222 0, #777 2px, #4c4c4c 8px, #1b1b1b 9px, #1b1b1b 22px, #000);
    color: #fff;
}

.app-icon {
    width: 19px;
    height: 19px;
}

.titlebar h1 {
    margin-left: 4px;
    font-family: "Noto Sans", "Noto Sans CJK SC", sans-serif;
    font-size: 13px;
    line-height: 20px;
    font-weight: normal;
    flex: 1;
}

.brand {
    font-family: Inter, sans-serif;
    font-weight: 900;
    font-size: 13px;
    line-height: 20px;
    margin-right: 28px;
    padding-top: 2px;
}

.win-buttons {
    display: flex;
    gap: 4px;
}

.win-buttons button {
    width: 19px;
    height: 19px;
    border-radius: 3px;
    background: linear-gradient(#777, #333);
}

.win-buttons .close {
    background: linear-gradient(#f09080, #d83820);
}

.win-buttons svg {
    width: 17px;
    height: 17px;
}

.menubar {
    height: 24px;
    flex-shrink: 0;
    display: flex;
    align-items: center;
    background: linear-gradient(#e8e8e8, #e0e0e0);
    border-bottom: 1px solid #bbb;
}

.menubar .grip {
    height: 16px;
    width: 7px;
}

.menu-icon {
    width: 17px;
    height: 17px;
    margin-right: 5px;
}

.menubar a {
    color: #000;
    text-decoration: none;
    margin-right: 11px;
    line-height: 20px;
    padding-bottom: 1px;
    white-space: nowrap;
}

.menubar a span {
    font-family: "Liberation Mono", monospace;
    font-size: 11px;
}

.doc-buttons {
    display: flex;
    gap: 3px;
    margin-left: auto;
    margin-right: 6px;
}

.doc-buttons button {
    width: 16px;
    height: 17px;
    border: 1px solid #888;
    border-radius: 3px;
    background: #f4f4f4;
}

.doc-buttons button:disabled {
    border-color: #ccc;
}

.doc-buttons svg {
    width: 14px;
    height: 14px;
}

/* toolbars */
.toolbars {
    height: 102px;
    flex-shrink: 0;
    background: linear-gradient(#e2e2e2, #cacaca);
    border-bottom: 1px solid #888;
}

.toolrow {
    display: flex;
    height: 34px;
}

.toolbar {
    display: flex;
    align-items: center;
    height: 34px;
    padding-right: 1px;
    border-right: 1px solid #b4b4b4;
    border-bottom: 1px solid #bcbcbc;
    background: rgba(255, 255, 255, 0.15);
    box-shadow: inset 0 1px rgba(255, 255, 255, 0.4);
}

.grip {
    width: 8px;
    height: 24px;
    flex-shrink: 0;
    background: radial-gradient(#a4a4a4 1px, transparent 2px) 2px 0 / 4px 4px repeat-y;
}

.tool {
    width: 31px;
    height: 30px;
}

.tool svg {
    width: 24px;
    height: 24px;
}

.tool.off svg {
    opacity: 0.8;
}

.plugin .tool text {
    font-size: 13px;
    font-weight: bold;
}

.on {
    background: #fff;
    border: 1px solid #777;
    border-radius: 3px;
}

.wide svg {
    width: 24px;
    height: 24px;
    margin-right: 4px;
}

.finish {
    width: 80px;
    margin-right: 7px;
}

.finder {
    width: 94px;
}

.arrow {
    width: 12px;
    height: 30px;
}

.arrow::after {
    content: "";
    border: 3px solid transparent;
    border-top: 4px solid #000;
    border-bottom: none;
}

.arrow.low {
    align-items: flex-end;
    padding-bottom: 6px;
}

.arrow.small {
    width: 8px;
}

.sep {
    width: 1px;
    height: 30px;
    margin: 0 2px 0 3px;
    background: #fff;
    flex-shrink: 0;
}

.drop {
    position: relative;
    display: flex;
    height: 17px;
}

.drop select {
    appearance: none;
    width: 100%;
    margin: 0;
    padding: 0 0 0 1px;
    border: 2px solid #808890;
    border-right-color: #6890c0;
    border-radius: 4px;
    background: #fff;
    color: #000;
    font-family: "Noto Sans CJK SC", sans-serif;
    font-size: 12px;
    line-height: 13px;
}

/* the blue drop button at the right end of the field */
.drop::after {
    content: "";
    position: absolute;
    right: 1px;
    top: 1px;
    width: 16px;
    height: 15px;
    border-radius: 0 3px 3px 0;
    background: linear-gradient(#000, #000) 4px 5px / 8px 1px no-repeat, linear-gradient(#000, #000) 5px 6px / 6px 1px no-repeat, linear-gradient(#000, #000) 6px 7px / 4px 2px no-repeat, linear-gradient(#000, #000) 7px 9px / 2px 1px no-repeat, linear-gradient(#dcecfa, #5c9cdc);
    pointer-events: none;
}

.sketch {
    width: 80px;
    margin-right: 5px;
}

.sketch select {
    padding: 0;
    font-family: "Liberation Mono", monospace;
    font-size: 10px;
}

.selection {
    height: 28px;
    flex-shrink: 0;
    display: flex;
    align-items: center;
    padding-left: 5px;
    background: linear-gradient(#cacaca, #e0e0e0);
    border-bottom: 1px solid #b0b0b0;
}

.filter {
    width: 111px;
    margin-right: 8px;
}

.scope {
    width: 117px;
    margin-right: 4px;
}

.selection .sep {
    height: 24px;
}

.pick {
    width: 23px;
    height: 22px;
}

.pick svg {
    width: 18px;
    height: 18px;
}

.pick.off svg {
    opacity: 0.7;
}

.arrow.last {
    margin-left: auto;
    margin-right: 3px;
}

.status {
    height: 22px;
    flex-shrink: 0;
    display: flex;
    background: #dcdcdc;
    border-bottom: 1px solid #999;
    font-size: 13px;
    line-height: 21px;
    font-weight: bold;
}

.cue {
    width: 911px;
    padding-left: 2px;
    border-right: 1px solid #aaa;
}

.state {
    flex: 1;
    padding-left: 3px;
}

.status-tools {
    width: 42px;
    display: flex;
    align-items: center;
    justify-content: space-around;
    border-left: 1px solid #aaa;
}

.status-tools svg {
    width: 15px;
    height: 15px;
}

/* graphics window */
.workspace {
    flex: 1;
    min-height: 0;
    display: flex;
    background: #b0b0b0;
}

.canvas {
    flex: 1;
    position: relative;
    background: #d3d4d6;
}

.sketch-lines {
    position: absolute;
}

.dialog {
    position: absolute;
    left: 28px;
    top: 33px;
    width: 170px;
    border: 1px solid #111;
    border-bottom: 8px solid #1b1b1b;
    border-radius: 5px;
    background: #ebebeb;
}

.dialog header {
    display: flex;
    height: 21px;
    align-items: center;
    color: #fff;
    background: linear-gradient(#777, #444 8px, #1b1b1b 9px);
    border-radius: 4px 4px 0 0;
}

.dialog header button {
    width: 20px;
    height: 20px;
}

.dialog header svg {
    width: 14px;
    height: 14px;
}

.dialog h2 {
    flex: 1;
    height: 20px;
    padding-left: 9px;
    border-left: 1px solid #999;
    border-right: 1px solid #999;
    font-size: 13px;
    line-height: 18px;
}

.dialog-body {
    display: flex;
    gap: 3px;
    padding: 6px 8px 9px;
}

.dialog fieldset {
    flex: 1;
    min-width: 0;
    margin: 0;
    padding: 1px 4px 4px;
    border: 1px solid #999;
    border-right-color: #fff;
    border-bottom-color: #fff;
    background: #d4d4d6;
}

.dialog legend {
    float: left;
    width: 100%;
    padding: 0 3px;
    font-size: 13px;
    line-height: 19px;
    font-weight: bold;
}

.choices {
    clear: both;
    display: flex;
    justify-content: space-between;
    padding-top: 1px;
}

.choice {
    width: 30px;
    height: 30px;
}

.choice svg {
    width: 24px;
    height: 24px;
}

.choice.on {
    border-color: #864;
    background: linear-gradient(#fde0c8, #fbb680 48%, #f98e40 50%, #ffc890);
}

.choice.xy {
    font-family: "Noto Sans", sans-serif;
    font-size: 18px;
    color: #1a1a80;
}

.params {
    position: absolute;
    left: 612px;
    top: 358px;
    width: 108px;
    height: 44px;
    display: flex;
    border: 1px solid #888;
    background: linear-gradient(#e4e4e4, #c4c4c4);
}

.params-grip {
    width: 12px;
    background: radial-gradient(#999 1px, transparent 2px) 3px 4px / 4px 4px, linear-gradient(90deg, #666, #111);
}

.fields {
    flex: 1;
    display: grid;
    grid-template-columns: 24px 56px;
    gap: 1px 3px;
    padding: 3px 2px 4px 7px;
    align-items: center;
}

.fields input {
    min-width: 0;
    height: 17px;
    padding: 0 2px;
    border: 1px solid #888;
    border-radius: 3px;
    font-family: "Noto Sans", sans-serif;
    font-size: 11px;
}

/* resource bar browser */
.browser {
    width: 533px;
    display: flex;
    flex-direction: column;
    padding: 0 9px 8px 10px;
    background: #ebebeb;
    border-left: 1px solid #fff;
    border-right: 1px solid #888;
}

.browser header {
    height: 31px;
    display: flex;
    align-items: center;
    justify-content: space-between;
    padding: 1px 5px 0 4px;
}

.browser h2 {
    font-family: "Liberation Mono", monospace;
    font-size: 12px;
}

.browser header svg {
    width: 11px;
    height: 11px;
}

.browser-bar {
    height: 34px;
    display: flex;
    align-items: center;
    gap: 11px;
    padding-left: 3px;
    padding-bottom: 2px;
    background: linear-gradient(#e6e6e6, #cacaca);
}

.browser-bar button {
    gap: 6px;
}

.browser-bar svg {
    width: 18px;
    height: 18px;
}

.browser-bar .home {
    margin-left: -4px;
    gap: 5px;
}

.browser-bar .home svg {
    width: 22px;
    height: 22px;
}

.browser-bar .web {
    gap: 3px;
    font-family: "Liberation Mono", monospace;
    font-size: 10px;
}

.web i {
    border: 3px solid transparent;
    border-top-color: #222;
    border-bottom: none;
}

.page {
    flex: 1;
    min-height: 0;
    display: flex;
    flex-direction: column;
    background: #fff;
    border-left: 1px solid #666;
    border-top: 2px solid #777;
}

.page-view {
    flex: 1;
    min-height: 0;
    display: flex;
    overflow: hidden;
}

.drawing {
    flex: 1;
    overflow: hidden;
    min-width: 0;
    height: 100%;
}

.heading {
    font-family: "Noto Sans CJK SC", sans-serif;
    font-size: 22px;
}

.thick {
    fill: none;
    stroke: #000;
    stroke-width: 2px;
}

.thin {
    fill: none;
    stroke: #444;
    stroke-width: 1px;
}

.arrows line {
    marker-end: url(#arr);
}

.iso {
    fill: none;
    stroke: #222;
    stroke-width: 1px;
}

.dims {
    font-family: "DejaVu Sans", sans-serif;
    font-size: 15px;
    text-anchor: middle;
}

.vscroll {
    width: 17px;
    display: flex;
    flex-direction: column;
    justify-content: space-between;
    align-items: center;
    padding: 16px 0;
    background: #f8f8f8;
}

.vscroll svg {
    width: 12px;
    height: 10px;
}

.hscroll {
    height: 17px;
    display: flex;
    align-items: center;
    justify-content: space-between;
    padding: 0 34px 0 16px;
    background: #f0f0f0;
}

.hscroll svg {
    width: 10px;
    height: 12px;
}

.track {
    flex: 1;
    height: 16px;
    margin: 0 8px;
}

.thumb {
    display: block;
    width: 80%;
    height: 100%;
    background: #cdcdcd;
}

.tabs {
    width: 33px;
    display: flex;
    flex-direction: column;
    align-items: flex-start;
    gap: 2px;
    padding-top: 17px;
}

.tabs button {
    width: 26px;
    height: 40px;
    border: 1px solid #888;
    border-left: none;
    border-radius: 0 4px 4px 0;
    background: linear-gradient(90deg, #e4e4e4, #d0d0d0);
}

.tabs .active {
    width: 28px;
    height: 44px;
    background: #ebebeb;
}

.tabs .gap {
    margin-top: 10px;
}

.tabs svg {
    width: 23px;
    height: 23px;
}

/* desktop */
.taskbar {
    height: 40px;
    flex-shrink: 0;
    display: flex;
    gap: 1px;
    background: #090d18;
}

.taskbar button {
    width: 48px;
    height: 40px;
}

.taskbar .start {
    width: 50px;
}

.taskbar svg {
    width: 24px;
    height: 24px;
}

.open {
    background: linear-gradient(#76b9ed, #76b9ed) center bottom / 40px 2px no-repeat;
}

.open.current {
    background: linear-gradient(#76b9ed, #76b9ed) center bottom / 48px 2px no-repeat, #3b404a;
}

.channel {
    width: 600px;
    margin-left: auto;
    padding-right: 34px;
    display: flex;
    align-items: center;
    justify-content: flex-end;
    gap: 8px;
    background: #101010;
    color: #fff;
    font-family: "Noto Sans CJK SC", sans-serif;
    font-size: 32px;
    line-height: 32px;
    font-weight: 900;
}

.channel strong {
    padding-bottom: 4px;
}

.channel svg {
    width: 30px;
    height: 30px;
}

.speed {
    position: absolute;
    top: 153px;
    right: 47px;
    width: 102px;
    height: 39px;
    display: flex;
    align-items: center;
    border-radius: 0 20px 20px 0;
    background: linear-gradient(#fafafa, #e4e4e4);
    box-shadow: 0 0 2px #555;
}

.ball {
    width: 48px;
    height: 48px;
    margin-left: -24px;
    flex-shrink: 0;
    border: 2px solid #e8e8e8;
    border-radius: 50%;
    background: linear-gradient(#1a9868, #0c7850 46%, #48d060 48%, #40c458);
    box-shadow: 0 0 3px #333;
    color: #fff;
    font-family: "Noto Sans", sans-serif;
    font-size: 14px;
    line-height: 42px;
    text-align: center;
}

.speed ul {
    flex: 1;
    list-style: none;
    padding: 0 5px 0 4px;
    font-family: "Noto Sans", sans-serif;
    font-size: 10px;
    line-height: 15px;
}

.speed li {
    display: flex;
    align-items: center;
    justify-content: space-between;
}

.speed li svg {
    width: 8px;
    height: 10px;
}

.up {
    fill: #d84830;
}

.down {
    fill: #189050;
}

.plus {
    width: 20px;
    height: 20px;
    margin-right: 4px;
}

.ime {
    position: absolute;
    right: 0;
    bottom: 123px;
    width: 152px;
    height: 21px;
    display: flex;
    align-items: center;
    gap: 6px;
    background: #fff;
    font-size: 15px;
    line-height: 20px;
}

.ime .grip {
    height: 18px;
    margin-left: 2px;
    margin-right: -4px;
}

.ime b {
    width: 15px;
    height: 15px;
    border: 1px solid #222;
    font-size: 13px;
    line-height: 14px;
    font-weight: normal;
    text-align: center;
}

.ime .dim {
    color: #888;
}

.ime .punct {
    width: 12px;
    font-weight: bold;
}

.ime svg {
    width: 16px;
    height: 16px;
}

.ime .more {
    width: 6px;
    height: 14px;
    margin-left: 4px;
}

.notice {
    position: absolute;
    right: 0;
    bottom: 0;
    width: 225px;
    height: 17px;
    padding-left: 2px;
    background: #fff;
    color: #e00000;
    font-size: 14px;
    line-height: 17px;
    font-weight: bold;
    white-space: nowrap;
}

.notice span {
    padding-left: 4px;
    font-family: "Liberation Mono", monospace;
    font-size: 13px;
}
```
